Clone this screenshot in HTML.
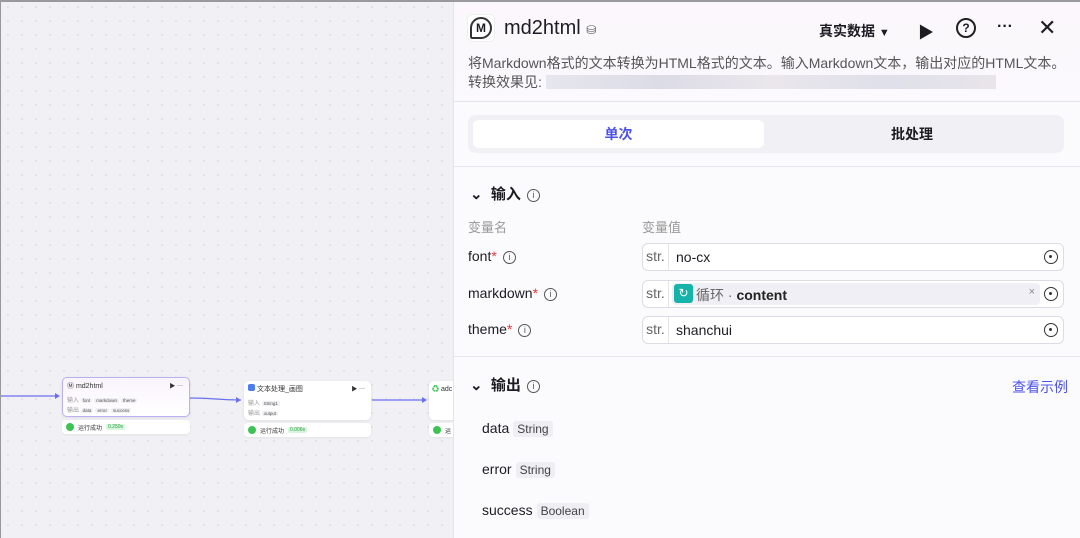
<!DOCTYPE html>
<html><head><meta charset="utf-8"><style>
*{box-sizing:border-box;margin:0;padding:0}
body{width:1080px;height:538px;overflow:hidden;font-family:"Liberation Sans","Noto Sans CJK SC",sans-serif;background:#f2f2f6;position:relative;color:#1d1c23}
.canvas{position:absolute;left:0;top:0;width:453px;height:538px;background-color:#f1f1f5;background-image:radial-gradient(#dcdce2 0.8px,transparent 0.9px);background-size:14px 14px;border-left:1px solid #999}
.topline{position:absolute;left:0;top:0;width:1080px;height:2px;background:#9a9a9e;z-index:5}
.node{position:absolute;background:#fff;border-radius:5px;box-shadow:0 1px 3px rgba(0,0,0,.08);font-size:6px;color:#333}
.st{position:absolute;background:#fff;border-radius:4px;font-size:6px;color:#333;display:flex;align-items:center;padding-left:4px;gap:4px;box-shadow:0 1px 2px rgba(0,0,0,.06)}
.ok{width:8px;height:8px;border-radius:50%;background:#3ec254}
.tm{background:#d8f5dd;color:#2ba043;padding:0 2px;border-radius:2px;font-size:5px}
.tag{display:inline-block;background:#f0f0f4;color:#555;border-radius:2px;padding:0 2px;font-size:4.5px;margin-right:2px}
.panel{position:absolute;left:453px;top:0;width:627px;height:538px;background:#fbfbfd;border-left:1px solid #e3e3ea}
.hd{position:absolute;left:0;top:0;width:627px;height:101px;background:linear-gradient(#fbf7fc,#fbf9fd)}
.abs{position:absolute;white-space:nowrap}
.hr{position:absolute;left:0;width:627px;height:1px;background:#e5e5ec}
.inp{position:absolute;left:188px;width:422px;height:28px;border:1px solid #dcdce4;border-radius:6px;background:#fff;font-size:14px}
.inp .s{position:absolute;left:0;top:0;width:26px;height:26px;border-right:1px solid #e5e5ea;color:#666;font-size:14px;text-align:center;line-height:24px}
.inp .v{position:absolute;left:33px;top:5px}
.inp .c{position:absolute;right:5px;top:6px;width:14px;height:14px;border:1.4px solid #333;border-radius:50%}
.inp .c:after{content:"";position:absolute;left:4px;top:4px;width:3px;height:3px;background:#333;border-radius:50%}
.lbl{position:absolute;left:14px;font-size:14px}
.lbl b{color:#e53935;font-weight:normal}
.i{display:inline-block;width:13px;height:13px;border:1px solid #555;border-radius:50%;font-size:9px;text-align:center;line-height:11px;margin-left:6px;vertical-align:1px;color:#555}
.ot{position:absolute;left:28px;font-size:14px}
.ot span{background:#eeeef3;color:#444;font-size:12px;padding:1px 4px;border-radius:3px;margin-left:4px}
</style></head><body>
<div class="topline"></div>
<div class="canvas">
<svg width="453" height="538" style="position:absolute;left:0;top:0">
<path d="M0 396 H58" stroke="#6b70ee" stroke-width="1.2" fill="none"/><path d="M54 393 L59 396 L54 399" fill="#6b70ee"/>
<path d="M189 398 C215 398 215 400 240 400" stroke="#6b70ee" stroke-width="1.2" fill="none"/><path d="M235 397 L240 400 L235 403" fill="#6b70ee"/>
<path d="M371 400 H425" stroke="#6b70ee" stroke-width="1.2" fill="none"/><path d="M421 397 L426 400 L421 403" fill="#6b70ee"/>
</svg>
<div class="node" style="left:61px;top:377px;width:128px;height:40px;border:1px solid #b9b2f0;background:linear-gradient(#faf4fd,#fff)">
<div class="abs" style="left:4px;top:3px;font-size:7px">Ⓜ md2html</div><div class="abs" style="right:6px;top:3px">▶ ⋯</div>
<div class="abs" style="left:4px;top:17px;color:#999">输入 <span class="tag">font</span><span class="tag">markdown</span><span class="tag">theme</span></div>
<div class="abs" style="left:4px;top:27px;color:#999">输出 <span class="tag">data</span><span class="tag">error</span><span class="tag">success</span></div></div>
<div class="st" style="left:61px;top:420px;width:128px;height:14px"><div class="ok"></div>运行成功 <span class="tm">0.250s</span></div>
<div class="node" style="left:243px;top:381px;width:127px;height:39px">
<div class="abs" style="left:4px;top:3px;font-size:7px"><span style="display:inline-block;width:7px;height:7px;background:#4c7cf0;border-radius:2px"></span> 文本处理_画图</div><div class="abs" style="right:6px;top:3px">▶ ⋯</div>
<div class="abs" style="left:4px;top:17px;color:#999">输入 <span class="tag">String1</span></div>
<div class="abs" style="left:4px;top:27px;color:#999">输出 <span class="tag">output</span></div></div>
<div class="st" style="left:243px;top:423px;width:127px;height:14px"><div class="ok"></div>运行成功 <span class="tm">0.006s</span></div>
<div class="node" style="left:428px;top:381px;width:30px;height:39px"><div class="abs" style="left:3px;top:3px;font-size:7px;color:#3ec254">♻ <span style="color:#333">adc</span></div></div>
<div class="st" style="left:428px;top:423px;width:30px;height:14px"><div class="ok"></div>运</div>
</div>
<div class="panel">
<div class="hd"></div>
<div class="abs" style="left:13px;top:14px;width:28px;height:28px;border-radius:5px;background:#fff;border:1px solid #eee"><div style="position:absolute;left:2px;top:2px;width:22px;height:22px;border:2.2px solid #333;border-radius:50% 50% 50% 10%;font-size:12px;font-weight:bold;text-align:center;line-height:18px">M</div></div>
<div class="abs" style="left:50px;top:17px;font-size:20px">md2html <span style="font-size:12px;color:#555">⛁</span></div>
<div class="abs" style="left:365px;top:21px;font-size:14px;font-weight:bold">真实数据 <span style="font-size:11px">▼</span></div>
<div class="abs" style="left:464px;top:19px;font-size:16px">▶</div>
<div class="abs" style="left:502px;top:18px;width:20px;height:20px;border:2px solid #222;border-radius:50%;font-size:12px;font-weight:bold;text-align:center;line-height:16px">?</div>
<div class="abs" style="left:543px;top:22px;font-size:16px;font-weight:bold;line-height:10px">···</div>
<div class="abs" style="left:584px;top:15px;font-size:22px">✕</div>
<div class="abs" style="left:14px;top:54px;font-size:14px;color:#555;line-height:19px">将Markdown格式的文本转换为HTML格式的文本。输入Markdown文本，输出对应的HTML文本。<br>转换效果见: <span style="display:inline-block;width:450px;height:14px;background:linear-gradient(90deg,#e6e6ee,#dcdce6,#eae6ec,#dfe0ea,#e8e4ea);vertical-align:-2px"></span></div>
<div class="hr" style="top:101px"></div>
<div class="abs" style="left:14px;top:115px;width:596px;height:38px;background:#f0f0f5;border-radius:8px"></div>
<div class="abs" style="left:19px;top:120px;width:291px;height:28px;background:#fff;border-radius:6px;text-align:center;line-height:28px;font-size:14px;color:#4d53e8;font-weight:bold">单次</div>
<div class="abs" style="left:310px;top:120px;width:296px;height:28px;text-align:center;line-height:28px;font-size:14px;font-weight:bold">批处理</div>
<div class="hr" style="top:166px"></div>
<div class="abs" style="left:16px;top:183px;font-size:15px;font-weight:bold">⌄ &nbsp;输入<span class="i" style="font-weight:normal">i</span></div>
<div class="abs" style="left:14px;top:217px;font-size:13px;color:#999">变量名</div>
<div class="abs" style="left:188px;top:217px;font-size:13px;color:#999">变量值</div>
<div class="lbl" style="top:248px">font<b>*</b><span class="i">i</span></div>
<div class="lbl" style="top:285px">markdown<b>*</b><span class="i">i</span></div>
<div class="lbl" style="top:321px">theme<b>*</b><span class="i">i</span></div>
<div class="inp" style="top:243px"><div class="s">str.</div><div class="v">no-cx</div><div class="c"></div></div>
<div class="inp" style="top:280px"><div class="s">str.</div><div style="position:absolute;left:29px;top:2px;width:368px;height:22px;background:#efeff5;border-radius:4px"><span style="position:absolute;left:2px;top:1px;width:19px;height:19px;background:#16b3a9;border-radius:3px;color:#fff;font-size:12px;text-align:center;line-height:19px">↻</span><span style="position:absolute;left:24px;top:2px;color:#666">循环 · <span style="color:#222;font-weight:bold">content</span></span><span style="position:absolute;right:5px;top:3px;color:#888;font-size:11px">×</span></div><div class="c"></div></div>
<div class="inp" style="top:316px"><div class="s">str.</div><div class="v">shanchui</div><div class="c"></div></div>
<div class="hr" style="top:356px"></div>
<div class="abs" style="left:16px;top:374px;font-size:15px;font-weight:bold">⌄ &nbsp;输出<span class="i" style="font-weight:normal">i</span></div>
<div class="abs" style="left:558px;top:377px;font-size:14px;color:#4d53e8">查看示例</div>
<div class="ot" style="top:420px">data<span>String</span></div>
<div class="ot" style="top:461px">error<span>String</span></div>
<div class="ot" style="top:502px">success<span>Boolean</span></div>
</div>
</body></html>
